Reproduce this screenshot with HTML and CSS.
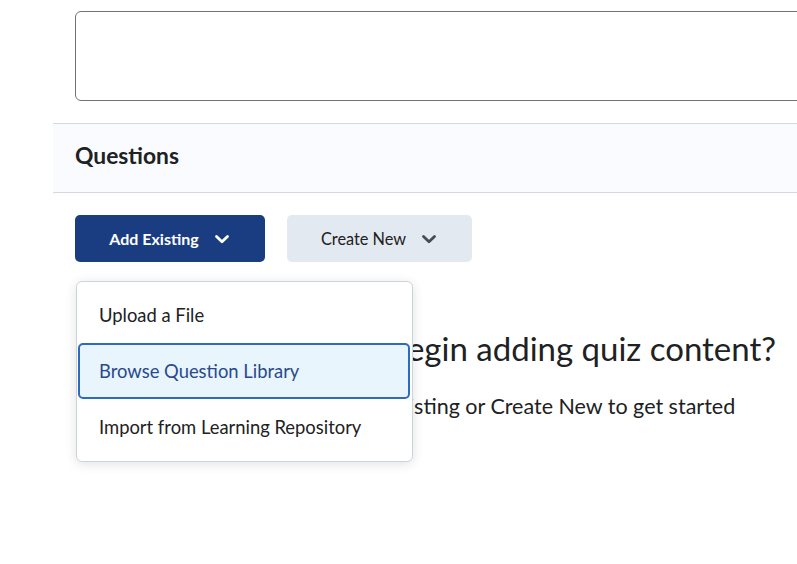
FILE: index.html
```html
<!DOCTYPE html>
<html>
<head>
<meta charset="utf-8">
<link rel="stylesheet" href="styles.css">
</head>
<body>
<div class="page">
  <div class="desc-wrap">
    <div class="textarea"></div>
  </div>
  <div class="section-head">
    <h2 class="section-title">Questions</h2>
  </div>
  <div class="actions">
    <div class="btn-row">
      <button class="btn btn-primary">Add Existing
        <svg class="chev" viewBox="0 0 18 18" width="18" height="18"><path d="M3.5 6.5 L9 11.8 L14.5 6.5" fill="none" stroke="currentColor" stroke-width="2.8" stroke-linecap="round" stroke-linejoin="round"/></svg>
      </button>
      <button class="btn btn-secondary">Create New
        <svg class="chev" viewBox="0 0 18 18" width="18" height="18"><path d="M3.5 6.5 L9 11.8 L14.5 6.5" fill="none" stroke="currentColor" stroke-width="2.8" stroke-linecap="round" stroke-linejoin="round"/></svg>
      </button>
    </div>
    <div class="empty">
      <h3 class="empty-title">Ready to begin adding quiz content?</h3>
      <p class="empty-text">Select Add Existing or Create New to get started</p>
    </div>
    <div class="menu">
      <div class="menu-item">Upload a File</div>
      <div class="menu-item active">Browse Question Library</div>
      <div class="menu-item">Import from Learning Repository</div>
    </div>
  </div>
</div>
</body>
</html>
```
FILE: styles.css
```css
html, body {
  margin: 0;
  padding: 0;
  background: #ffffff;
  overflow: hidden;
  width: 797px;
  height: 564px;
}
body {
  font-family: Lato, "Open Sans", sans-serif;
  color: #202122;
}
.page {
  padding-left: 53px;
  width: 744px;
  height: 564px;
  overflow: hidden;
}
.desc-wrap {
  padding: 11px 0 0 22px;
  height: 123px;
  box-sizing: border-box;
}
.textarea {
  width: 800px;
  height: 90px;
  box-sizing: border-box;
  border: 1px solid #6e7477;
  border-radius: 6px;
  background: #fff;
}
.section-head {
  background: #f9fbff;
  border-top: 1px solid #d3d9e3;
  border-bottom: 1px solid #d3d9e3;
  width: 900px;
  height: 70px;
  box-sizing: border-box;
  padding: 0 0 6px 22px;
  display: flex;
  align-items: center;
}
.section-title {
  margin: 0;
  font-size: 22.8px;
  font-weight: 700;
  color: #202122;
}
.actions {
  position: relative;
  padding: 22px 0 0 22px;
  width: 900px;
}
.btn-row {
  display: flex;
  gap: 22px;
}
.btn {
  font-family: Lato, sans-serif;
  font-size: 16px;
  font-weight: 700;
  height: 47px;
  border: none;
  border-radius: 5px;
  display: flex;
  align-items: center;
  justify-content: center;
  gap: 14px;
  padding: 0;
  margin: 0;
}
.btn-primary {
  width: 190px;
  background: #1a3d82;
  color: #ffffff;
}
.btn-secondary {
  width: 185px;
  background: #e3e9f1;
  color: #202122;
  font-weight: 400;
  font-size: 16.3px;
}
.btn-secondary .chev {
  color: #494c4e;
}
.chev {
  display: block;
}
.empty {
  margin-top: 64px;
  width: 872px;
  text-align: center;
}
.empty-title {
  margin: 0;
  padding-left: 7px;
  font-size: 33px;
  font-weight: 400;
  line-height: 44px;
  color: #202122;
}
.empty-text {
  margin: 22px 0 0;
  padding-right: 7px;
  font-size: 21.5px;
  line-height: 28px;
  color: #202122;
}
.menu {
  position: absolute;
  left: 23px;
  top: 88px;
  width: 337px;
  box-sizing: border-box;
  background: #fff;
  border: 1px solid #cdd5dc;
  border-radius: 6px;
  padding: 5px 0 6px;
  box-shadow: 0 2px 12px rgba(0, 0, 0, 0.12);
  z-index: 2;
}
.menu-item {
  height: 56px;
  box-sizing: border-box;
  display: flex;
  align-items: center;
  padding-left: 19px;
  font-size: 18.4px;
  color: #202122;
  border: 2px solid transparent;
  margin: 0 2px 0 1px;
}
.menu-item.active {
  background: #e8f5fd;
  border-color: #2e6bc0;
  border-radius: 5px;
  color: #29498c;
}
```
